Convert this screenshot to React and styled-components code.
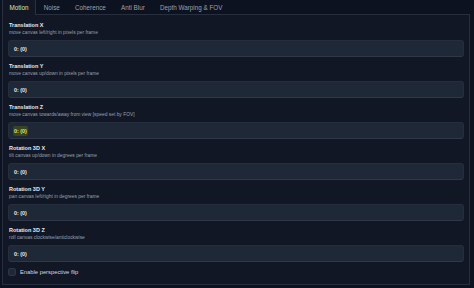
import styled, { createGlobalStyle } from 'styled-components'

const GlobalStyle = createGlobalStyle`
  html, body {
    margin: 0;
    padding: 0;
    background: #0d1220;
  }
  body {
    font-family: 'Liberation Sans', Arial, sans-serif;
    color: #e5e7eb;
  }
`

const Page = styled.div`
  width: 474px;
  height: 288px;
  padding: 0 4px 0 2px;
  box-sizing: border-box;
  overflow: hidden;
`

const TabBar = styled.div`
  display: flex;
  align-items: flex-end;
  height: 15px;
  border-bottom: 1px solid #272f3e;
  box-sizing: border-box;
`

const Tab = styled.div`
  height: 16px;
  box-sizing: border-box;
  padding: 0 6.6px;
  display: flex;
  align-items: center;
  font-size: 6.3px;
  color: ${({ $active }) => ($active ? '#dfe6a2' : '#9aa1ad')};
  background: ${({ $active }) => ($active ? '#111725' : 'transparent')};
  border: 1px solid ${({ $active }) => ($active ? '#2a3242' : 'transparent')};
  border-bottom: none;
  border-radius: 2px 2px 0 0;
  margin-bottom: -1px;
`

const Panel = styled.div`
  border: 1px solid #272f3e;
  border-top: none;
  background: #111725;
  padding: 6px 4px 5px 5px;
  height: 270px;
  box-sizing: border-box;
`

const Field = styled.div`
  display: flex;
  flex-direction: column;
  margin-bottom: 5px;
`

const Title = styled.div`
  font-size: 5.5px;
  font-weight: bold;
  color: #e7e9ee;
  line-height: 8px;
  padding-left: 1px;
`

const Desc = styled.div`
  font-size: 4.9px;
  color: #98a0ad;
  line-height: 8px;
  padding-left: 1px;
  margin-bottom: 3px;
`

const ValueBox = styled.div`
  height: 17px;
  box-sizing: border-box;
  background: #1f2836;
  border: 1px solid #252e3c;
  border-bottom-color: #2e3848;
  border-radius: 3px;
  display: flex;
  align-items: center;
  padding-left: 4px;
  margin-right: 1px;
`

const Value = styled.span`
  font-size: 5.4px;
  font-weight: bold;
  color: ${({ $hl }) => ($hl ? '#d8e36a' : '#e3e6ec')};
  background: ${({ $hl }) => ($hl ? '#3a4420' : 'transparent')};
  padding: 2px 1px;
  border-radius: 2px;
`

const CheckRow = styled.label`
  display: flex;
  align-items: center;
  gap: 4px;
  margin-top: 6px;
  font-size: 5.8px;
  color: #d5d9e0;
`

const Box = styled.span`
  width: 8px;
  height: 8px;
  box-sizing: border-box;
  border-radius: 2px;
  background: #1f2836;
  border: 1px solid #2c3646;
`

const tabs = ['Motion', 'Noise', 'Coherence', 'Anti Blur', 'Depth Warping & FOV']

const fields = [
  { title: 'Translation X', desc: 'move canvas left/right in pixels per frame' },
  { title: 'Translation Y', desc: 'move canvas up/down in pixels per frame' },
  { title: 'Translation Z', desc: 'move canvas towards/away from view [speed set by FOV]', hl: true },
  { title: 'Rotation 3D X', desc: 'tilt canvas up/down in degrees per frame' },
  { title: 'Rotation 3D Y', desc: 'pan canvas left/right in degrees per frame' },
  { title: 'Rotation 3D Z', desc: 'roll canvas clockwise/anticlockwise' },
]

export default function App() {
  return (
    <Page>
      <GlobalStyle />
      <TabBar>
        {tabs.map((t, i) => (
          <Tab key={t} $active={i === 0}>{t}</Tab>
        ))}
      </TabBar>
      <Panel>
        {fields.map(f => (
          <Field key={f.title}>
            <Title>{f.title}</Title>
            <Desc>{f.desc}</Desc>
            <ValueBox>
              <Value $hl={f.hl}>0: (0)</Value>
            </ValueBox>
          </Field>
        ))}
        <CheckRow>
          <Box />
          Enable perspective flip
        </CheckRow>
      </Panel>
    </Page>
  )
}
